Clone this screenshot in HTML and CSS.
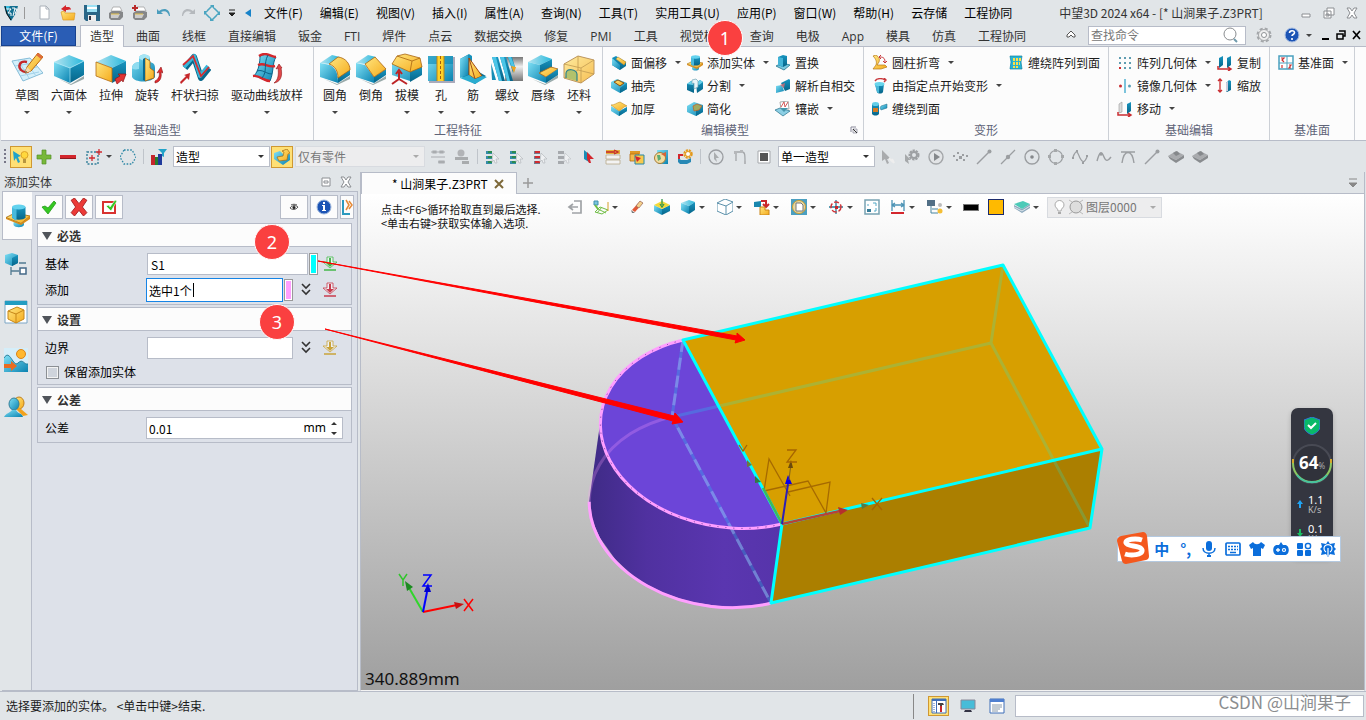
FILE: index.html
```html
<!DOCTYPE html>
<html lang="zh-CN">
<head>
<meta charset="utf-8">
<title>中望3D 2024 x64</title>
<link rel="stylesheet" href="styles.css">
</head>
<body>
<svg class="sprite" aria-hidden="true">
<defs>
<linearGradient id="gb" x1="0" y1="0" x2="1" y2="1"><stop offset="0" stop-color="#7fe0f5"/><stop offset="1" stop-color="#0a82b0"/></linearGradient>
<linearGradient id="gt" x1="0" y1="0" x2="1" y2="0"><stop offset="0" stop-color="#b5e4f0"/><stop offset="1" stop-color="#28b8dc"/></linearGradient>
<linearGradient id="gd" x1="0" y1="0" x2="0" y2="1"><stop offset="0" stop-color="#1895c0"/><stop offset="1" stop-color="#066488"/></linearGradient>
<linearGradient id="gy" x1="0" y1="0" x2="1" y2="1"><stop offset="0" stop-color="#ffe680"/><stop offset="1" stop-color="#f5ab1c"/></linearGradient>
<linearGradient id="gm" x1="0" y1="0" x2="0" y2="1"><stop offset="0" stop-color="#777"/><stop offset=".4" stop-color="#eee"/><stop offset="1" stop-color="#777"/></linearGradient>
</defs>
<!-- large ribbon icons -->
<symbol id="sketch" viewBox="0 0 32 32"><path d="M1 8L19 5 32 20 12 28z" fill="#d4effa" stroke="#86bdd8"/><path d="M4 13l19-3M7 18l19-4M9 23l19-4M7 7l11 18M13 6l12 17" stroke="#a3d3ea" fill="none"/><path d="M16 9c-8-2-9 5-6 8s8 3 8-1" fill="none" stroke="#c4272a" stroke-width="2.4"/><path d="M27 0l5 4-12 14-6 2 2-6z" fill="url(#gy)" stroke="#b96a10"/><path d="M16 14l4 4-6 2z" fill="#f4d9b0"/><path d="M15 18l1 1-2 1z" fill="#222"/><path d="M27 0l5 4-2 2-5-4z" fill="#e06a3a"/></symbol>
<symbol id="box" viewBox="0 0 32 32"><path d="M6 26l12 5 13-8v3l-13 6z" fill="#9aa"/><path d="M1 9L16 2l15 6-14 7z" fill="url(#gt)"/><path d="M1 9l16 6v15L1 23z" fill="url(#gb)"/><path d="M17 15l14-7v14l-14 8z" fill="url(#gd)"/><path d="M1 9l16 6 14-7M17 15v15" fill="none" stroke="#aeeaf8" stroke-width=".7"/></symbol>
<symbol id="extrude" viewBox="0 0 32 32"><path d="M1 9L16 2l15 6-14 7z" fill="url(#gt)"/><path d="M17 15l14-7v14l-14 8z" fill="url(#gd)"/><path d="M1 9l16 6v14L1 23z" fill="url(#gy)" stroke="#b26a10" stroke-width=".8"/><path d="M20 26l5-3-2-2 8 0-3 8-1-2-5 4z" fill="#e03434" stroke="#8f1517" stroke-width=".7"/></symbol>
<symbol id="revolve" viewBox="0 0 32 32"><path d="M1 15c0-4 4-6 7-6V5c0-4 9-5 11 0v4c4 1 5 3 5 6v9c-4 6-20 6-23 0z" fill="url(#gb)"/><ellipse cx="13.500" cy="4.500" rx="5.500" ry="3" fill="#a6e6f5"/><path d="M1 15c0-3 3-6 7-6v7c-4 1-7 0-7-1" fill="#8fdcf0"/><path d="M14 5l5 3v7l4 3v7l-9 3z" fill="url(#gy)" stroke="#a96412" stroke-width=".8"/><path d="M14 5l-2 1v21l2 1z" fill="#0a6a90"/><path d="M24 28c4-2 5-6 4-9l-2 1 4-6 2 6-2-1c1 6-1 10-6 11z" fill="#df2c30" stroke="#8f1517" stroke-width=".6"/></symbol>
<symbol id="rod" viewBox="0 0 32 32"><path d="M6 15L15 4l7 21 8-10" fill="none" stroke="#08688c" stroke-width="6" stroke-linejoin="round"/><path d="M5 14L15 3l6 20 8-10" fill="none" stroke="#39b6d8" stroke-width="4" stroke-linejoin="round"/><path d="M4 12L14 3l8 20 8-9" fill="none" stroke="#d32c30" stroke-width="1.800"/><path d="M1 29l6-6-2-1 6-2-1 7-2-2-6 6z" fill="#c6272a"/></symbol>
<symbol id="drive" viewBox="0 0 32 32"><path d="M9 3c7-4 11 1 16 1-4 6-2 15-6 24-6 0-9-4-16-5C8 17 9 9 9 3z" fill="url(#gb)" stroke="#0a658c"/><path d="M8 3c7-5 12 1 17 1M7 12c7-3 10 3 17 1M2 23c7-1 10 5 17 5" fill="none" stroke="#d3272c" stroke-width="2.400"/><path d="M17 2c-5 9 0 16-6 23M6 18c6-2 9 3 15 3" fill="none" stroke="#0b6288"/><path d="M23 30c4-3 5-8 4-15l-2 1 3-5 3 4-1 0c2 9-1 14-7 15z" fill="#e0474a" stroke="#8f1517" stroke-width=".6"/></symbol>
<symbol id="fillet" viewBox="0 0 32 32"><path d="M5 26l13 5 13-8v3l-13 6z" fill="#9aa"/><path d="M1 10L13 2l8 2-10 7z" fill="url(#gt)"/><path d="M1 10l10 2c6 3 8 8 8 18L1 24z" fill="url(#gb)"/><path d="M19 24l12-8v6l-12 8z" fill="url(#gd)"/><path d="M10 11l9-7c8 1 12 7 12 13l-12 8c0-7-3-12-9-14z" fill="url(#gy)" stroke="#a96412" stroke-width=".8"/></symbol>
<symbol id="chamfer" viewBox="0 0 32 32"><path d="M5 26l13 5 13-8v3l-13 6z" fill="#9aa"/><path d="M1 10L13 2l8 2-10 7z" fill="url(#gt)"/><path d="M1 10l9 2 9 12v6L1 24z" fill="url(#gb)"/><path d="M19 24l12-8v6l-12 8z" fill="url(#gd)"/><path d="M10 11l10-7 11 12-12 8z" fill="url(#gy)" stroke="#a96412" stroke-width=".8"/></symbol>
<symbol id="draft" viewBox="0 0 32 32"><path d="M1 11l10-4 20 6v8l-12 7L1 22z" fill="url(#gb)"/><path d="M19 19l12-6v9l-12 7z" fill="url(#gd)"/><path d="M1 11l5-8 8-2 15 4 2 9-12 5z" fill="url(#gy)" stroke="#a96412" stroke-width=".8"/><path d="M6 3l15 5 8-3M21 8l-2 11" fill="none" stroke="#a96412" stroke-width=".8"/><path d="M8 19v7l-7 5M8 26l8 5M5 21l3-4 3 4" fill="none" stroke="#bd2326" stroke-width="2"/></symbol>
<symbol id="hole" viewBox="0 0 32 32"><path d="M4 4h26v26H4z" fill="#aab"/><path d="M3 3h25v25H3z" fill="url(#gb)"/><path d="M3 3h25v8H3z" fill="#0b86b1" opacity=".6"/><path d="M12 3h7v25h-7z" fill="#ffd028"/><path d="M12 3v25M19 3v25" stroke="#b98316"/><path d="M15.500 3v25" stroke="#a25d10" stroke-dasharray="3 2"/></symbol>
<symbol id="rib" viewBox="0 0 32 32"><path d="M3 6l9-5 3 2v12l14 8-11 8-15-8z" fill="url(#gd)"/><path d="M3 6l8-4v20l-8 3z" fill="url(#gb)"/><path d="M12 5l13 18-7 3-6-4z" fill="url(#gy)" stroke="#a34a12"/><path d="M12 5l6 21" stroke="#a34a12"/><path d="M3 25l9-3 6 4 7-3 5 1-12 7z" fill="#2badd0"/></symbol>
<symbol id="thread" viewBox="0 0 32 32"><path d="M14 4h18v24H14z" fill="url(#gm)"/><path d="M1 4l7 24h6L7 4zM9 4l7 24h6L15 4zM17 4l5 16 2-6-3-10z" fill="url(#gd)"/><path d="M1 4h4l6 24H8zM9 4h4l6 24h-3zM17 4h3l4 10-1 6z" fill="#4cc5e7"/><path d="M20 13l5 1-2 6z" fill="#f2a21c"/><path d="M0 10l5 17H1z" fill="#158db5"/></symbol>
<symbol id="lip" viewBox="0 0 32 32"><path d="M5 26l13 5 13-9v3l-13 7z" fill="#9aa"/><path d="M1 9L14 2l11 4-12 6z" fill="url(#gt)"/><path d="M1 9l12 3v8l6 4v6L1 23z" fill="url(#gb)"/><path d="M13 12l12-6v9l-12 6z" fill="url(#gd)"/><path d="M12 20l12-6 7 2-12 8z" fill="url(#gy)" stroke="#a96412" stroke-width=".8"/><path d="M19 24l12-8v6l-12 8z" fill="url(#gd)"/></symbol>
<symbol id="stock" viewBox="0 0 32 32"><path d="M1 11L15 3l16 4v14L18 30 1 25z" fill="url(#gy)" opacity=".75" stroke="#a8742a"/><path d="M1 11l17 4 13-8M18 15v15M1 25l14-8 16 4M15 3v14" fill="none" stroke="#c19a50" stroke-width=".8"/><path d="M3 25v-5c1-5 10-4 11 1v7" fill="#b3c26c" stroke="#31848c" stroke-width="1.200"/></symbol>
<!-- compact icons -->
<symbol id="cube" viewBox="0 0 16 16"><path d="M1 4l8-3 6 2-6 4z" fill="url(#gt)"/><path d="M1 4l8 3v8l-8-4z" fill="url(#gb)"/><path d="M9 7l6-4v8l-6 4z" fill="url(#gd)"/></symbol>
<symbol id="offset" viewBox="0 0 16 16"><path d="M1 3l4-2 10 6v4l-6 4-8-5z" fill="url(#gd)"/><path d="M1 3l8 7v5l-8-5z" fill="url(#gb)"/><path d="M5 4l8 6 2-3-8-5z" fill="url(#gy)" stroke="#b98a30" stroke-width=".5"/></symbol>
<symbol id="shell" viewBox="0 0 16 16"><path d="M0 4l6-3 10 4v6l-7 4-9-5z" fill="url(#gb)"/><path d="M9 10l7-5v6l-7 4z" fill="url(#gd)"/><path d="M3 4l4-2 6 3-4 3z" fill="url(#gy)" stroke="#875112"/></symbol>
<symbol id="thick" viewBox="0 0 16 16"><path d="M0 5l8 5 8-4v4l-8 5-8-5z" fill="url(#gb)"/><path d="M0 4c4 0 5-2 9-3l7 4c-5 1-5 4-8 5z" fill="url(#gy)" stroke="#c18c22" stroke-width=".6"/><path d="M8 11l8-5v4l-8 5z" fill="url(#gd)"/></symbol>
<symbol id="addsolid" viewBox="0 0 16 16"><path d="M5 12h7v2c-1 2-6 2-7 0z" fill="url(#gb)"/><path d="M0 9l6-3 10 2-6 5z" fill="url(#gy)" stroke="#a8701a" stroke-width=".6"/><path d="M0 9l10 4 6-5v2l-6 4-10-4z" fill="#d98c18"/><path d="M4 2v7c1 2 8 2 9 0V2z" fill="url(#gd)"/><path d="M4 2v7c1 1 2 2 3 2V2z" fill="#48b9db"/><ellipse cx="8.500" cy="2" rx="4.500" ry="1.700" fill="#63d2ee"/></symbol>
<symbol id="divide" viewBox="0 0 16 16"><path d="M0 6l4-3 3 1v11l-7-3zM9 5l4-3 3 2v7l-6 4z" fill="url(#gd)"/><path d="M0 6l4-3 3 1-1 3zM9 5l4-3 3 2-4 3z" fill="#69d2ec"/><path d="M5 2l4-1 2 2v6l-4 2V5L5 6z" fill="#e8f4f8" stroke="#6ea4b5" stroke-width=".7"/></symbol>
<symbol id="simplify" viewBox="0 0 16 16"><path d="M0 5l7-4 9 3v7l-7 4-9-4z" fill="url(#gb)"/><path d="M9 9l7-5v7l-7 4z" fill="url(#gd)"/><path d="M6 5l4-2 5 2-3 4-5 1z" fill="#a0aa60" stroke="#c65b20" stroke-width=".7"/></symbol>
<symbol id="replace" viewBox="0 0 16 16"><path d="M1 11l6-3 8 2-6 5z" fill="#79c8df" stroke="#3c8aa1"/><path d="M3 2l5-2 4 1v9l-4 2-5-2z" fill="url(#gd)"/><path d="M3 2l5 1v9l-5-2z" fill="#44b5d8"/></symbol>
<symbol id="selfx" viewBox="0 0 16 16"><path d="M1 8l6-1 2 6-8 2z" fill="url(#gb)"/><path d="M6 5l8-4 1 1v9l-5 2z" fill="url(#gd)"/><path d="M5 7l5-2-1 5z" fill="#d66b74" opacity=".8"/></symbol>
<symbol id="inlay" viewBox="0 0 16 16"><path d="M0 9l5-2 10 3-7 5z" fill="#8ccfe4" stroke="#25708b" stroke-width=".7"/><path d="M6 8L5 1l8-1 1 8z" fill="#fff" stroke="#aaa"/><path d="M6 6l3-5 1 5 3-5" stroke="#c33" fill="none" stroke-width=".8"/><path d="M5 7l4 4 4-4z" fill="#4595ac"/></symbol>
<symbol id="cylbend" viewBox="0 0 16 16"><path d="M1 1l3-1c3 2 4 4 3 7l-2 3 8 0 2 2-6 2H1l3-4C5 7 4 4 1 1z" fill="url(#gy)" stroke="#b5791b" stroke-width=".7"/><path d="M8 2c4 0 5 2 5 5M9 0L7 2l2 2M11 6l2 2 2-2" fill="none" stroke="#c9363a"/></symbol>
<symbol id="deform" viewBox="0 0 16 16"><path d="M3 6h9l-1 8c-1 2-5 2-6 0z" fill="url(#gd)"/><path d="M3 6h4v9c-2 0-2-1-2-1z" fill="#48b8d8"/><ellipse cx="7.500" cy="6" rx="5" ry="2" fill="#68d5ec"/><path d="M3 3c2-3 7-3 10-1M12 0l2 2-2 2" fill="none" stroke="#c8363a" stroke-width="1.400"/></symbol>
<symbol id="wrap" viewBox="0 0 16 16"><path d="M0 3h7v10c-2 2-5 2-7 0z" fill="url(#gd)"/><ellipse cx="3.500" cy="3" rx="3.500" ry="2" fill="#63cde7"/><path d="M1 7h5v4H1z" fill="#d57b23"/><path d="M9 5l6-2v4l-6 2-1-2z" fill="url(#gb)" stroke="#25708b" stroke-width=".5"/></symbol>
<symbol id="wraparr" viewBox="0 0 16 16"><path d="M2 1h12l-1 6 1 7H2l1-7z" fill="#27b4d4" stroke="#14819f" stroke-width=".7"/><path d="M5 3h2v3H5zM8 3h2v3H8zM11 3h2v3h-2zM5 7h2v3H5zM8 7h2v3H8zM11 7h1v3h-1zM5 11h2v2H5zM8 11h2v2H8z" fill="#ffe04a"/></symbol>
<symbol id="pattern" viewBox="0 0 16 16"><path d="M2 2h2v2H2zM7 2h2v2H7zM12 2h2v2h-2zM2 7h2v2H2zM7 7h2v2H7zM12 7h2v2h-2zM7 12h2v2H7zM12 12h2v2h-2z" fill="#5f9db1"/><path d="M2 12h2v2H2z" fill="#d02b2e"/></symbol>
<symbol id="mirror" viewBox="0 0 16 16"><path d="M7 1h2v14H7z" fill="#7cc4dc"/><circle cx="3.500" cy="8" r="1.500" fill="#c92c30"/><circle cx="12.500" cy="8" r="1.500" fill="#5aa0b8"/></symbol>
<symbol id="move" viewBox="0 0 16 16"><path d="M2 3l3-2v10l-3 1z" fill="#ddd" stroke="#999" stroke-width=".6"/><path d="M10 3l4-2v9l-4 3z" fill="url(#gd)"/><path d="M1 11v3h12M11 12l3 2-3 2" fill="none" stroke="#c92c30" stroke-width="1.500"/></symbol>
<symbol id="copy" viewBox="0 0 16 16"><path d="M2 3l4-2v9l-4 3zM10 3l4-2v9l-4 3z" fill="url(#gd)"/><path d="M1 11v3h12M11 12l3 2-3 2" fill="none" stroke="#c92c30" stroke-width="1.500"/></symbol>
<symbol id="scale" viewBox="0 0 16 16"><path d="M3 1v13M1 3l2-2 2 2M1 12l2 2 2-2" fill="none" stroke="#c92c30" stroke-width="1.300"/><path d="M9 5l3-3 2 1v9l-4 2-1-1z" fill="url(#gd)"/><path d="M9 5l2-2v10H9z" fill="#ccd"/></symbol>
<symbol id="datum" viewBox="0 0 16 16"><path d="M1 1h14v13H1z" fill="#fff" stroke="#4aa0be" stroke-width="1.500"/><path d="M9 1v7h6M1 8h8v6" fill="none" stroke="#4aa0be"/><path d="M3 3h3l-2 2 2 2M4 10v3M11 10h2l-2 3h2" stroke="#c33" stroke-width="1.200" fill="none"/></symbol>
<symbol id="logo" viewBox="0 0 16 16"><path d="M1 1h14l-2 7-5 8-5-8z" fill="#136f91"/><path d="M1 1h6l-3 6z" fill="#35bbdf"/><path d="M3 4h5L5 8h3v3M9 3h3l-2 8M12 4h2l-2 5" fill="none" stroke="#fff"/><path d="M2 1l2 8 4 6" fill="none" stroke="#111"/></symbol>
<symbol id="new" viewBox="0 0 16 16"><path d="M4 1h6l3 3v10H4z" fill="#fff" stroke="#aab1b9"/><path d="M10 1v3h3" fill="none" stroke="#aab1b9"/></symbol>
<symbol id="open" viewBox="0 0 16 16"><path d="M1 7l3-1 1 2h10l-1 7H3z" fill="url(#gy)" stroke="#dc9a22" stroke-width=".7"/><path d="M11 5C11 1 7 2 6 2V0L1 4l5 3V5c3 0 4-1 5 0z" fill="#d5262b"/></symbol>
<symbol id="save" viewBox="0 0 16 16"><path d="M0 0h16v16H2l-2-2z" fill="#2a6687"/><path d="M3 0h10v7H3z" fill="#9be1f4"/><path d="M3 2h10v2H3z" fill="#fff"/><path d="M4 10h8v6H4z" fill="#eee"/><path d="M5 11h2v4H5z" fill="#334"/></symbol>
<symbol id="print" viewBox="0 0 16 16"><path d="M5 2h7l2 4H3z" fill="#fff" stroke="#999" stroke-width=".7"/><path d="M1 8l3-2h8l3 1v5l-3 3H3l-2-2z" fill="#858789"/><path d="M3 9h9l-2 4H3z" fill="#ccc"/><path d="M3 9h8" stroke="#e3c04a"/></symbol>
<symbol id="undo" viewBox="0 0 16 16"><path d="M1 4v5h6L5 7c4-2 7 0 8 4h1C14 4 8 2 3 6z" fill="#4b9dbd"/></symbol>
<symbol id="redo" viewBox="0 0 16 16"><path d="M15 4v5H9l2-2C7 5 4 7 3 11H2C2 4 8 2 13 6z" fill="#b5b9bd"/></symbol>
<symbol id="cycle" viewBox="0 0 16 16"><path d="M3 6l5-5M10 3l5 5M13 10l-5 5M6 13L1 8" fill="none" stroke="#4ba5c1" stroke-width="1.600"/><path d="M6 0h4v4zM16 6v4h-4zM10 16H6v-4zM0 10V6h4z" fill="#4ba5c1"/></symbol>
<symbol id="bulbpick" viewBox="0 0 16 16"><path d="M0 2l8 5-3 1 2 5-2 1-2-5-2 3z" fill="#22a3c9"/><circle cx="11.500" cy="6" r="3.500" fill="#ffd83c" stroke="#dda428"/><path d="M10 10h3v4h-3z" fill="#b7963f"/></symbol>
<symbol id="plus" viewBox="0 0 16 16"><path d="M6 1h4v5h5v4h-5v5H6v-5H1V6h5z" fill="#78b83a" stroke="#55902a" stroke-width=".7"/></symbol>
<symbol id="minus" viewBox="0 0 16 16"><path d="M0 6h16v4H0z" fill="#d3262d"/><path d="M0 9h16v1H0z" fill="#8c1a1f"/></symbol>
<symbol id="boxpick" viewBox="0 0 16 16"><path d="M1 3h11v12H1z" fill="none" stroke="#35809a" stroke-width="1.400" stroke-dasharray="2 1.500"/><path d="M6 6v6M3 9h6M13 0v6M10 3h6" stroke="#d02b30" stroke-width="1.300"/></symbol>
<symbol id="hex" viewBox="0 0 16 16"><path d="M4 1h8l4 7-4 7H4L0 8z" fill="none" stroke="#2d87a5" stroke-width="1.300" stroke-dasharray="1.600 1.500"/></symbol>
<symbol id="filter" viewBox="0 0 16 16"><path d="M0 6h4v10H0z" fill="#c5262b"/><path d="M4 8h3v8H4z" fill="#287d2e"/><path d="M7 5h4v11H7z" fill="#203b9c"/><path d="M7 0h9l-3 4v4l-2-1V4z" fill="#22a3c9"/></symbol>
<symbol id="partpick" viewBox="0 0 16 16"><path d="M0 4l6-2 4 4 6-1v6l-7 5-9-6z" fill="url(#gb)"/><path d="M3 8l6-1 1-4-2-1 5-2 3 4-2 1-1 6-8 1z" fill="url(#gy)" stroke="#a06912" stroke-width=".7"/></symbol>
<symbol id="chain" viewBox="0 0 16 16"><path d="M1 3h14M1 8h14M8 13h7M3 2h3v2H3zM10 2h3v2h-3zM9 12h5v2H9z" fill="none" stroke="#a9acaf" stroke-width="1.200"/></symbol>
<symbol id="stamp" viewBox="0 0 16 16"><circle cx="7" cy="4" r="3.500" fill="#b1b3b6"/><path d="M1 8h13v3H1zM8 12h7v3H8z" fill="#a8abad"/></symbol>
<symbol id="list" viewBox="0 0 16 16"><path d="M1 2h6v3H1zM1 7h6v3H1zM1 12h6v3H1z" fill="#358ca8"/><path d="M3 3h4M3 8h4M3 13h4" stroke="#2a8b34" stroke-width="1.400"/><path d="M8 4l6 6-3 0 1 4-2 0-1-3-2 2z" fill="#eef0f2" stroke="#b5b9bd" stroke-width=".7"/></symbol>
<symbol id="listr" viewBox="0 0 16 16"><path d="M1 2h6v3H1zM1 7h6v3H1zM1 12h6v3H1z" fill="#74788c"/><path d="M2 3h5M2 8h5M2 13h5" stroke="#d02b30" stroke-width="1.800"/><path d="M8 4l6 6-3 0 1 4-2 0-1-3-2 2z" fill="#eef0f2" stroke="#b5b9bd" stroke-width=".7"/></symbol>
<symbol id="listg" viewBox="0 0 16 16"><path d="M1 2h6v3H1zM1 7h6v3H1zM1 12h6v3H1z" fill="#a6a9ad"/><path d="M8 4l6 6-3 0 1 4-2 0-1-3-2 2z" fill="#eef0f2" stroke="#c3c6ca" stroke-width=".7"/></symbol>
<symbol id="arrow2" viewBox="0 0 16 16"><path d="M3 1l6 5-2 1 1 6-5-3z" fill="#1b8db5"/><path d="M6 3l7 7H9l1 4-2 0-2-4z" fill="#d3262d"/></symbol>
<symbol id="rows" viewBox="0 0 16 16"><path d="M1 1h14v4H1z" fill="#e5b23c"/><path d="M1 6h14v4H1zM1 11h14v4H1z" fill="#f3f3f3" stroke="#b8a98a" stroke-width=".8"/><path d="M1 3h9M9 1l4 2-4 2" stroke="#c5262b" stroke-width="1.300" fill="none"/></symbol>
<symbol id="boxes" viewBox="0 0 16 16"><path d="M1 2h10v3H1z" fill="#e09a24"/><path d="M1 5h9v7H1z" fill="#f4bb4a" stroke="#b36b12" stroke-width=".8"/><path d="M6 6h9v9H6z" fill="#f8c94c" stroke="#2788a8"/><path d="M6 7l6 2-4 4z" fill="#d3262d"/></symbol>
<symbol id="earth" viewBox="0 0 16 16"><path d="M4 1h11v14H5z" fill="url(#gb)"/><circle cx="7" cy="9" r="5.500" fill="#f2dca0" stroke="#a97d36"/><path d="M4 6l3 0 1 4-3 2z" fill="#5bab74"/><path d="M8 5l5-2v5z" fill="#d3663a"/></symbol>
<symbol id="geary" viewBox="0 0 16 16"><path d="M1 9l3 2h6l4-2v4l-4 2H3l-2-2z" fill="#2788b5"/><path d="M2 10V6h4" fill="none" stroke="#d3262d" stroke-width="2"/><circle cx="11" cy="5" r="3.500" fill="none" stroke="#e49a1c" stroke-width="2.500" stroke-dasharray="2 .8"/><circle cx="11" cy="5" r="2.500" fill="#fff" stroke="#e49a1c"/></symbol>
<symbol id="compass" viewBox="0 0 16 16"><circle cx="8" cy="8" r="7" fill="none" stroke="#9b9ea2" stroke-width="1.300"/><path d="M6 3l5 6-3 0 1 4-3-3z" fill="#aaadaf"/></symbol>
<symbol id="poly" viewBox="0 0 16 16"><path d="M4 12V3h4M10 3c3 0 3 3 3 10" fill="none" stroke="#a3a6a9" stroke-width="1.300"/><path d="M2 2h3v3H2zM8 1h3v3H8zM12 12h2v3h-2z" fill="#b5b7ba"/></symbol>
<symbol id="square" viewBox="0 0 16 16"><path d="M2 2h12v12H2z" fill="#fff" stroke="#a5a8ac"/><path d="M4 4h8v8H4z" fill="#555"/></symbol>
<symbol id="cursorg" viewBox="0 0 16 16"><path d="M2 1l9 9H7l2 4-2 1-2-5-3 2z" fill="#a9abad"/><path d="M9 9l4 4M12 10l2 4" stroke="#eee" stroke-width="2"/></symbol>
<symbol id="gearg" viewBox="0 0 16 16"><circle cx="10" cy="6" r="4.500" fill="none" stroke="#9da0a3" stroke-width="2" stroke-dasharray="2.300 .9"/><circle cx="10" cy="6" r="3" fill="#e1e5e8" stroke="#9da0a3" stroke-width="2"/><path d="M1 5l6 6-3 0 1 4-4-3z" fill="#a5a8aa"/></symbol>
<symbol id="playg" viewBox="0 0 16 16"><circle cx="8" cy="8" r="7" fill="#e2e4e6" stroke="#a3a6a9" stroke-width="1.400"/><path d="M6 4l6 4-6 4z" fill="#85888b"/></symbol>
<symbol id="dotsg" viewBox="0 0 16 16"><path d="M1 6h2v2H1zM4 10h2v2H4zM5 3h2v2H5zM7 7h3v3H7zM10 5h2v2h-2zM14 6h2v2h-2zM11 10h2v2h-2z" fill="#9b9ea1"/></symbol>
<symbol id="lineg" viewBox="0 0 16 16"><path d="M1 15L14 2" stroke="#9b9ea1" stroke-width="1.400"/><circle cx="13.500" cy="2.500" r="2" fill="#9b9ea1"/></symbol>
<symbol id="midg" viewBox="0 0 16 16"><path d="M1 15L15 1" stroke="#9b9ea1" stroke-width="1.300"/><circle cx="8" cy="8" r="2.200" fill="#9b9ea1"/></symbol>
<symbol id="cdotg" viewBox="0 0 16 16"><circle cx="8" cy="8" r="7" fill="none" stroke="#9b9ea1" stroke-width="1.400"/><circle cx="8" cy="8" r="1.800" fill="#85888b"/></symbol>
<symbol id="quadg" viewBox="0 0 16 16"><circle cx="8" cy="8" r="6.500" fill="none" stroke="#9b9ea1" stroke-width="1.200"/><path d="M6 0h3v3H6zM6 13h3v3H6zM0 6h3v3H0zM13 6h3v3h-3z" fill="#a5a8aa"/></symbol>
<symbol id="waveg" viewBox="0 0 16 16"><path d="M1 8C5-2 6 5 8 9s4 6 7-1" fill="none" stroke="#9b9ea1" stroke-width="1.300"/><path d="M4 1h2v2H4zM10 13h2v2h-2zM0 8h2v2H0zM14 6h2v2h-2z" fill="#9b9ea1"/></symbol>
<symbol id="wave2g" viewBox="0 0 16 16"><path d="M1 12C4 1 6 3 8 8s4 4 7 0" fill="none" stroke="#9b9ea1" stroke-width="1.400"/><circle cx="5" cy="5" r="1.800" fill="#9b9ea1"/></symbol>
<symbol id="tang" viewBox="0 0 16 16"><path d="M1 3h14M2 14C4 0 12 0 14 14" fill="none" stroke="#9b9ea1" stroke-width="1.400"/></symbol>
<symbol id="blockg" viewBox="0 0 16 16"><path d="M0 7l8-5 8 4-8 5z" fill="#a9abae"/><path d="M0 7l8 4 8-5v3l-8 5-6-4z" fill="#898c8f"/><path d="M5 4l4-2 3 3-4 2z" fill="#85888b"/></symbol>
<!-- panel and view icons -->
<symbol id="check" viewBox="0 0 16 16"><path d="M1 8l3-1 3 2 6-7 2 2-8 11z" fill="#35c822" stroke="#259b19" stroke-width=".8"/></symbol>
<symbol id="cross" viewBox="0 0 16 16"><path d="M1 2l3-2 4 5 4-5 3 2-4 6 4 5-3 3-4-5-4 5-3-3 4-5z" fill="#ec3a37" stroke="#a51e20" stroke-width=".8"/></symbol>
<symbol id="apply" viewBox="0 0 16 16"><path d="M2 3h12v11H2z" fill="#fff" stroke="#d8322f" stroke-width="2"/><path d="M5 7l3-1 1 2 5-7 2 1-6 10z" fill="#35c822" stroke="#fff" stroke-width=".6"/></symbol>
<symbol id="eye" viewBox="0 0 16 16"><path d="M4 9c2-3 6-3 8-1-2 3-6 3-8 1M5 6c2-1 4-1 6 0" fill="none" stroke="#555"/><circle cx="8" cy="8.500" r="1.500" fill="#222"/></symbol>
<symbol id="info" viewBox="0 0 16 16"><circle cx="8" cy="8" r="7" fill="#1c54b5" stroke="#9fb8dd"/><path d="M7 3h2v2H7zM6 6h3v5h1v1H6v-1h1V7H6z" fill="#fff"/></symbol>
<symbol id="expand" viewBox="0 0 12 16"><path d="M2 1v14h7" fill="none" stroke="#2c9abf" stroke-width="2"/><path d="M5 1l3 5-3 5M8 2l3 4-3 4" fill="none" stroke="#e58a37" stroke-width="1.500"/></symbol>
<symbol id="tree" viewBox="0 0 24 24"><path d="M1 3l7-2 6 2v8l-6 3-7-3z" fill="url(#gb)"/><path d="M8 6l6-3v8l-6 3z" fill="url(#gd)"/><path d="M7 15v8M7 19h8M15 11h7" stroke="#527b91" fill="none" stroke-width="1.300"/><path d="M16 16h6v6h-6z" fill="#fff" stroke="#446a88" stroke-width="1.500"/></symbol>
<symbol id="visual" viewBox="0 0 24 24"><path d="M1 1h22v22H1z" fill="#fff" stroke="#7da6c5"/><path d="M1 1h22v4H1z" fill="#239dc2"/><path d="M4 11l9-4 7 3v9l-8 4-8-4z" fill="url(#gy)" stroke="#c78718"/><path d="M4 11l8 3 8-4M12 14v9" fill="none" stroke="#c78718"/></symbol>
<symbol id="scene" viewBox="0 0 24 24"><path d="M0 0h24v24H0z" fill="#d5eef9"/><path d="M0 10c6-10 9 10 14 5s6 2 10 1v8H0z" fill="url(#gb)"/><path d="M0 10c6-10 9 10 14 5s6 2 10 1" fill="none" stroke="#267f9d"/><circle cx="17" cy="6" r="4.500" fill="#ffb82f" stroke="#dc841a"/><path d="M0 16h7v-3l6 5-6 5v-3H0z" fill="#e96c20"/></symbol>
<symbol id="users" viewBox="0 0 24 24"><ellipse cx="15" cy="7" rx="5" ry="6" fill="url(#gy)" stroke="#c0801c"/><path d="M14 11l3 2 7 6-5 1-7-7z" fill="#f2a21c"/><ellipse cx="10" cy="8" rx="5" ry="6" fill="url(#gb)" stroke="#337f99"/><path d="M0 21c2-4 6-4 8-7h4c2 4 6 3 7 7z" fill="url(#gb)"/></symbol>
<symbol id="pickdown" viewBox="0 0 16 16"><path d="M5 1h6v5h4l-7 6-7-6h4z" fill="#fff" fill-opacity=".5" stroke="currentColor" stroke-width=".8"/><path d="M7 2h2v5h3l-4 4-4-4h3z" fill="currentColor"/><path d="M2 14h12" stroke="currentColor" stroke-width="1.500"/></symbol>
<symbol id="chevrons" viewBox="0 0 12 16"><path d="M2 2l4 4 4-4M2 8l4 4 4-4" fill="none" stroke="#333" stroke-width="1.600"/></symbol>
<symbol id="exit" viewBox="0 0 16 16"><path d="M7 2h7v12H5M11 8H2M6 5L2 8l4 3" fill="none" stroke="#a0a3a6" stroke-width="1.700"/></symbol>
<symbol id="gridview" viewBox="0 0 16 16"><path d="M2 13l5-5 8 3-6 4zM5 10l8 4M9 8l-5 6" fill="none" stroke="#71be46"/><path d="M1 2h4v4H1z" fill="#7ac5df" stroke="#3e91ac"/><path d="M2 6l3 4" stroke="#71be46" stroke-width="2"/><path d="M15 3v9" stroke="#d4a12d"/></symbol>
<symbol id="eraser" viewBox="0 0 16 16"><path d="M3 11l8-9 3 2-8 9z" fill="#e05a38"/><path d="M7 7l4-5 3 2-4 5z" fill="#f4d18d" stroke="#755" stroke-width=".5"/><path d="M2 11l4 3-3 0z" fill="#777"/></symbol>
<symbol id="topface" viewBox="0 0 16 16"><path d="M0 6l8 4v6l-8-4z" fill="url(#gb)"/><path d="M8 10l8-4v6l-8 4z" fill="url(#gd)"/><path d="M0 6l8-4 8 4-8 4z" fill="#f3d93a"/><path d="M8 0v6M6 5l2 3 2-3" stroke="#34964b" fill="none" stroke-width="1.300"/></symbol>
<symbol id="wire" viewBox="0 0 16 16"><path d="M0 4l8-4 8 3v9l-7 4-9-4zM0 4l9 3 7-4M9 7v9" fill="#fff" stroke="#5c91ab"/></symbol>
<symbol id="swap" viewBox="0 0 16 16"><path d="M0 3l7-1v6H0z" fill="#1a87ae"/><path d="M7 2h5v5M9 5l3 3 3-3" stroke="#c9272b" fill="none" stroke-width="2"/><path d="M6 8h5v3h4v5H6z" fill="url(#gy)" stroke="#cb861b"/></symbol>
<symbol id="zoomdoc" viewBox="0 0 16 16"><path d="M0 0h16v16H0z" fill="#4b9fc0"/><circle cx="8" cy="8" r="6.500" fill="#e5d9a4" stroke="#ce9c2f"/><path d="M5 4h5l2 2v6H5z" fill="#fff" stroke="#777"/></symbol>
<symbol id="target" viewBox="0 0 16 16"><path d="M8 1v14M1 8h14" stroke="#267d9a" stroke-width="1.300"/><circle cx="8" cy="8" r="5" fill="none" stroke="#d0363a" stroke-width="1.500" stroke-dasharray="5 2"/><path d="M7 7h3v3H7z" fill="#c9272b"/></symbol>
<symbol id="fullview" viewBox="0 0 16 16"><path d="M1 1h14v14H1z" fill="#fff" stroke="#78a2b2" stroke-width="1.500"/><path d="M3 10h4v3H3z" fill="#367d9a"/><path d="M4 7V5M9 4h3v3M12 9v3h-2" stroke="#55a9c6" fill="none"/></symbol>
<symbol id="dim" viewBox="0 0 16 16"><path d="M2 1v11M14 1v11M2 6h12M5 4L2 6l3 2M11 4l3 2-3 2" fill="none" stroke="#4c93b5" stroke-width="1.300"/><path d="M1 14h13" stroke="#d3262d" stroke-width="2"/></symbol>
<symbol id="showtree" viewBox="0 0 16 16"><path d="M0 1h8v6H0z" fill="#526f86"/><path d="M4 7v7h7M5 10h6" fill="none" stroke="#4785a0"/><circle cx="13" cy="6" r="2" fill="#bbb"/><circle cx="13" cy="12" r="2.500" fill="#f4be35"/></symbol>
<symbol id="layers" viewBox="0 0 16 16"><path d="M0 6l8 4 8-5v4l-8 5-8-5z" fill="#8da9bd"/><path d="M0 5l9-3 7 3-8 5z" fill="#4ccab8"/><path d="M0 8l8 4 8-5" stroke="#fff" fill="none" stroke-width=".7"/></symbol>
<symbol id="bulb" viewBox="0 0 16 16"><path d="M6 12c0-3-3-3-3-6a4 4 0 0 1 9 0c0 3-3 3-3 6z" fill="#fff" stroke="#aaa"/><path d="M6 13h3v2H6z" fill="#aaa"/></symbol>
<symbol id="disc" viewBox="0 0 16 16"><path d="M1 1l3 2M15 1l-3 2M1 15l3-2M15 15l-3-2" stroke="#bbb"/><circle cx="8" cy="8" r="6" fill="#ddd" stroke="#999"/></symbol>
<symbol id="xmark" viewBox="0 0 12 12"><path d="M1 1h3l2 3 2-3h3L8 6l3 5H8L6 8l-2 3H1l3-5z" fill="#fff" stroke="#8b8e92"/></symbol>
<symbol id="gear" viewBox="0 0 16 16"><circle cx="8" cy="8" r="6.500" fill="#eee" stroke="#a3a6a9" stroke-width="2" stroke-dasharray="3 2.100"/><circle cx="8" cy="8" r="5.500" fill="#eee" stroke="#a3a6a9"/><circle cx="8" cy="8" r="2.500" fill="#fff" stroke="#8f9295"/></symbol>
<symbol id="search" viewBox="0 0 16 16"><circle cx="7" cy="7" r="6" fill="none" stroke="#8a8d90"/><path d="M11 12l3 3" stroke="#6f9aac" stroke-width="2"/></symbol>
<symbol id="tools" viewBox="0 0 16 16"><path d="M1 1h14v14H1z" fill="#fff" stroke="#3f6fb8"/><path d="M1 1h14v2H1z" fill="#3f6fb8"/><path d="M3 5v9" stroke="#3f6fb8" stroke-dasharray="1 1"/><path d="M5.500 3v12" stroke="#3f6fb8"/><path d="M7 5h5l1 2H7zM9 6h2v3H9z" fill="#444"/><path d="M9 8h2v6H9z" fill="#c9272b"/></symbol>
<symbol id="monitor" viewBox="0 0 16 16"><path d="M1 2h14v9H1z" fill="#46bcd8" stroke="#889"/><path d="M5 12h6l1 2H4z" fill="#334"/></symbol>
<symbol id="note" viewBox="0 0 16 16"><path d="M1 1h14v14H1z" fill="#fff" stroke="#3f6fb8"/><path d="M1 1h14v3H1z" fill="#4f7fd0"/><path d="M3 7h10M3 9h10M3 11h8M3 13h6" stroke="#89a"/></symbol>
<!-- input method bar -->
<symbol id="mic" viewBox="0 0 16 16"><rect x="5" y="0" width="6" height="10" rx="3" fill="#0b6edb"/><path d="M2 7c0 7 12 7 12 0M8 12v3" fill="none" stroke="#0b6edb" stroke-width="1.500"/><path d="M6 14h4v2H6z" fill="#0b6edb"/></symbol>
<symbol id="keyb" viewBox="0 0 16 16"><rect x="1" y="2" width="14" height="12" rx="1" fill="none" stroke="#0b6edb" stroke-width="1.700"/><path d="M3 5.500h10M3 8.500h10" stroke="#0b6edb" stroke-width="1.700" stroke-dasharray="2 1"/><path d="M5 11.500h6" stroke="#0b6edb" stroke-width="1.500"/></symbol>
<symbol id="shirt" viewBox="0 0 16 16"><path d="M4 1c2 3 6 3 8 0l4 3-2 4-2-1v8H4V7L2 8 0 4z" fill="#0b6edb"/></symbol>
<symbol id="pad" viewBox="0 0 16 16"><path d="M8 1l2 3h2c5 0 5 10 0 10H4C-1 14-1 4 4 4h2z" fill="#0b6edb"/><path d="M3 9h4M5 7v4" stroke="#fff" stroke-width="1.300"/><circle cx="11" cy="9" r="1.500" fill="none" stroke="#fff" stroke-width="1.200"/></symbol>
<symbol id="apps" viewBox="0 0 16 16"><rect x="1" y="2" width="6" height="6" rx="1" fill="#0b6edb"/><rect x="9.500" y="2.500" width="5" height="5" rx="2" fill="none" stroke="#0b6edb" stroke-width="1.500"/><rect x="1" y="9" width="6" height="6" rx="1" fill="#0b6edb"/><rect x="9" y="9" width="6" height="6" rx="1" fill="#0b6edb"/></symbol>
<symbol id="imeset" viewBox="0 0 16 16"><path d="M8 0l2 3 5-1-1 4 2 2-2 2 1 4-5-1-2 3-2-3-5 1 1-4-2-2 2-2-1-4 5 1z" fill="#0b6edb"/><path d="M6 11a4 4 0 1 1 4 0M8 7v8" fill="none" stroke="#fff" stroke-width="1.200"/></symbol>
<symbol id="sogou" viewBox="0 0 32 32"><path d="M4 4l22-4q3 0 4 4l2 20q0 3-3 4L9 32q-3 0-4-3L0 9q0-4 4-5z" fill="#f4581d"/><path d="M25 8c-6-2-17-1-16 3s15 2 16 7-11 6-17 4" fill="none" stroke="#fff" stroke-width="5"/></symbol>
</svg>

<header class="titlebar">
  <div class="quick">
    <svg class="i16"><use href="#logo"/></svg><i class="vline"></i>
    <button aria-label="新建"><svg class="i16"><use href="#new"/></svg></button>
    <button aria-label="打开"><svg class="i16"><use href="#open"/></svg></button>
    <button aria-label="保存"><svg class="i16"><use href="#save"/></svg></button>
    <button aria-label="打印"><svg class="i16"><use href="#print"/></svg></button>
    <button aria-label="批量打印"><svg class="i16"><use href="#print"/><path d="M3 0v6M0 3h6" stroke="#b92b2b" stroke-width="2"/></svg></button>
    <button aria-label="撤销"><svg class="i16"><use href="#undo"/></svg></button>
    <button aria-label="重做"><svg class="i16"><use href="#redo"/></svg></button>
    <button aria-label="刷新"><svg class="i16"><use href="#cycle"/></svg></button>
    <button class="slim" aria-label="自定义"><svg class="i8" viewBox="0 0 8 8"><path d="M1 1h6M1 4h6L4 7z" stroke="#222" fill="#222"/></svg></button>
    <button class="slim" aria-label="向左"><svg class="i8" viewBox="0 0 8 8"><path d="M7 0v8L1 4z" fill="#1883c9"/></svg></button>
  </div>
  <nav class="menu"><button>文件(F)</button><button>编辑(E)</button><button>视图(V)</button><button>插入(I)</button><button>属性(A)</button><button>查询(N)</button><button>工具(T)</button><button>实用工具(U)</button><button>应用(P)</button><button>窗口(W)</button><button>帮助(H)</button><button>云存储</button><button>工程协同</button></nav>
  <div class="title">中望3D 2024 x64 - [* 山涧果子.Z3PRT]</div>
  <div class="winctl">
    <button aria-label="最小化"><svg class="i12" viewBox="0 0 12 12"><path d="M2 7h8v3H2z" fill="#fff" stroke="#8b8e92"/></svg></button>
    <button aria-label="还原"><svg class="i12" viewBox="0 0 12 12"><path d="M4 1h7v7H4zM1 4h7v7H1zM3 7h3v2H3z" fill="#fff" stroke="#8b8e92"/></svg></button>
    <button aria-label="关闭"><svg class="i12"><use href="#xmark"/></svg></button>
  </div>
</header>

<div class="tabs">
  <button class="filebtn">文件(F)</button>
  <nav class="tablist"><button class="active">造型</button><button>曲面</button><button>线框</button><button>直接编辑</button><button>钣金</button><button>FTI</button><button>焊件</button><button>点云</button><button>数据交换</button><button>修复</button><button>PMI</button><button>工具</button><button>视觉样式</button><button>查询</button><button>电极</button><button>App</button><button>模具</button><button>仿真</button><button>工程协同</button></nav>
  <div class="tabtools">
    <button aria-label="折叠"><svg class="i12" viewBox="0 0 12 12"><path d="M2 6l4-4 4 4v2H8L6 6 4 8H2z" fill="#fff" stroke="#555"/></svg></button>
    <label class="find"><input type="text" placeholder="查找命令" aria-label="查找命令"><svg class="i16"><use href="#search"/></svg></label>
    <button aria-label="设置"><svg class="i16"><use href="#gear"/></svg></button>
    <button class="help" aria-label="帮助"><svg class="i16" viewBox="0 0 16 16"><circle cx="8" cy="8" r="7" fill="#1c54b5" stroke="#a9bfe2"/><path d="M5.500 6c0-3 5-3 5-.5 0 2-2.500 2-2.500 3.500M8 11v2" fill="none" stroke="#fff" stroke-width="1.600"/></svg><i class="caret"></i></button>
    <button aria-label="最小化文档"><svg class="i12" viewBox="0 0 12 12"><path d="M3 9h7v2H3z"/></svg></button>
    <button aria-label="还原文档"><svg class="i12" viewBox="0 0 12 12"><path d="M4 2h6v5H8M2 5h6v5H2z" fill="none" stroke="#000" stroke-width="1.500"/></svg></button>
    <button aria-label="关闭文档"><svg class="i12" viewBox="0 0 12 12"><path d="M2 2l7 8M9 2l-7 8" stroke="#000" stroke-width="1.700"/></svg></button>
  </div>
</div>

<section class="ribbon">
  <div class="group g1"><div class="big">
    <button><svg class="i32"><use href="#sketch"/></svg>草图<i class="caret"></i></button>
    <button><svg class="i32"><use href="#box"/></svg>六面体<i class="caret"></i></button>
    <button><svg class="i32"><use href="#extrude"/></svg>拉伸</button>
    <button><svg class="i32"><use href="#revolve"/></svg>旋转</button>
    <button><svg class="i32"><use href="#rod"/></svg>杆状扫掠<i class="caret"></i></button>
    <button><svg class="i32"><use href="#drive"/></svg>驱动曲线放样<i class="caret"></i></button>
  </div><h2>基础造型</h2></div>
  <div class="group g2"><div class="big">
    <button><svg class="i32"><use href="#fillet"/></svg>圆角<i class="caret"></i></button>
    <button><svg class="i32"><use href="#chamfer"/></svg>倒角</button>
    <button><svg class="i32"><use href="#draft"/></svg>拔模<i class="caret"></i></button>
    <button><svg class="i32"><use href="#hole"/></svg>孔<i class="caret"></i></button>
    <button><svg class="i32"><use href="#rib"/></svg>筋<i class="caret"></i></button>
    <button><svg class="i32"><use href="#thread"/></svg>螺纹<i class="caret"></i></button>
    <button><svg class="i32"><use href="#lip"/></svg>唇缘</button>
    <button><svg class="i32"><use href="#stock"/></svg>坯料<i class="caret"></i></button>
  </div><h2>工程特征</h2></div>
  <div class="group g3"><div class="small">
    <button><svg class="i16"><use href="#offset"/></svg>面偏移<i class="caret"></i></button>
    <button><svg class="i16"><use href="#shell"/></svg>抽壳</button>
    <button><svg class="i16"><use href="#thick"/></svg>加厚</button>
    <button><svg class="i16"><use href="#addsolid"/></svg>添加实体<i class="caret"></i></button>
    <button><svg class="i16"><use href="#divide"/></svg>分割<i class="caret"></i></button>
    <button><svg class="i16"><use href="#simplify"/></svg>简化</button>
    <button><svg class="i16"><use href="#replace"/></svg>置换</button>
    <button><svg class="i16"><use href="#selfx"/></svg>解析自相交</button>
    <button><svg class="i16"><use href="#inlay"/></svg>镶嵌<i class="caret"></i></button>
  </div><h2>编辑模型<svg class="i8 launch" viewBox="0 0 8 8"><path d="M1 6V1h5" fill="none" stroke="#889"/><path d="M3 3h4v4H3z" fill="#eee" stroke="#889" stroke-width=".7"/><path d="M3 3l4 4" stroke="#333"/></svg></h2></div>
  <div class="group g4"><div class="small">
    <button><svg class="i16"><use href="#cylbend"/></svg>圆柱折弯<i class="caret"></i></button>
    <button><svg class="i16"><use href="#deform"/></svg>由指定点开始变形<i class="caret"></i></button>
    <button><svg class="i16"><use href="#wrap"/></svg>缠绕到面</button>
    <button><svg class="i16"><use href="#wraparr"/></svg>缠绕阵列到面</button>
  </div><h2>变形</h2></div>
  <div class="group g5"><div class="small">
    <button><svg class="i16"><use href="#pattern"/></svg>阵列几何体<i class="caret"></i></button>
    <button><svg class="i16"><use href="#mirror"/></svg>镜像几何体<i class="caret"></i></button>
    <button><svg class="i16"><use href="#move"/></svg>移动<i class="caret"></i></button>
    <button><svg class="i16"><use href="#copy"/></svg>复制</button>
    <button><svg class="i16"><use href="#scale"/></svg>缩放</button>
  </div><h2>基础编辑</h2></div>
  <div class="group g6"><div class="small">
    <button><svg class="i16"><use href="#datum"/></svg>基准面<i class="caret"></i></button>
  </div><h2>基准面</h2></div>
</section>

<div class="toolbar">
  <i class="grip"></i>
  <button class="on" aria-label="智能拾取"><svg class="i16"><use href="#bulbpick"/></svg></button>
  <button aria-label="加选"><svg class="i16"><use href="#plus"/></svg></button>
  <button aria-label="减选"><svg class="i16"><use href="#minus"/></svg></button>
  <button class="drop" aria-label="框选"><svg class="i16"><use href="#boxpick"/></svg><i class="caret"></i></button>
  <button aria-label="多边形"><svg class="i16"><use href="#hex"/></svg></button>
  <i class="sep"></i>
  <button aria-label="过滤器"><svg class="i16"><use href="#filter"/></svg></button>
  <label class="combo"><select aria-label="过滤类型"><option>造型</option></select></label>
  <button class="on" aria-label="部件"><svg class="i16"><use href="#partpick"/></svg></button>
  <label class="combo wide off"><select disabled aria-label="范围"><option>仅有零件</option></select></label>
  <button aria-label="链"><svg class="i16"><use href="#chain"/></svg></button>
  <button aria-label="印章"><svg class="i16"><use href="#stamp"/></svg></button>
  <i class="sep"></i>
  <button aria-label="列表一"><svg class="i16"><use href="#list"/></svg></button>
  <button aria-label="列表二"><svg class="i16"><use href="#list"/></svg></button>
  <button aria-label="列表三"><svg class="i16"><use href="#listr"/></svg></button>
  <button aria-label="列表四"><svg class="i16"><use href="#listg"/></svg></button>
  <button aria-label="选择"><svg class="i16"><use href="#arrow2"/></svg></button>
  <button aria-label="行"><svg class="i16"><use href="#rows"/></svg></button>
  <button aria-label="组"><svg class="i16"><use href="#boxes"/></svg></button>
  <button aria-label="全局"><svg class="i16"><use href="#earth"/></svg></button>
  <button aria-label="选项"><svg class="i16"><use href="#geary"/></svg></button>
  <i class="sep"></i>
  <button aria-label="方向"><svg class="i16"><use href="#compass"/></svg></button>
  <button aria-label="多段"><svg class="i16"><use href="#poly"/></svg></button>
  <button aria-label="方块"><svg class="i16"><use href="#square"/></svg></button>
  <label class="combo"><select aria-label="造型模式"><option>单一造型</option></select></label>
  <button aria-label="光标"><svg class="i16"><use href="#cursorg"/></svg></button>
  <button aria-label="齿轮"><svg class="i16"><use href="#gearg"/></svg></button>
  <button aria-label="播放"><svg class="i16"><use href="#playg"/></svg></button>
  <button aria-label="点"><svg class="i16"><use href="#dotsg"/></svg></button>
  <button aria-label="端点"><svg class="i16"><use href="#lineg"/></svg></button>
  <button aria-label="中点"><svg class="i16"><use href="#midg"/></svg></button>
  <button aria-label="圆心"><svg class="i16"><use href="#cdotg"/></svg></button>
  <button aria-label="象限"><svg class="i16"><use href="#quadg"/></svg></button>
  <button aria-label="控制点"><svg class="i16"><use href="#waveg"/></svg></button>
  <button aria-label="曲线"><svg class="i16"><use href="#wave2g"/></svg></button>
  <button aria-label="相切"><svg class="i16"><use href="#tang"/></svg></button>
  <button aria-label="线上"><svg class="i16"><use href="#lineg"/></svg></button>
  <button aria-label="面"><svg class="i16"><use href="#blockg"/></svg></button>
  <button aria-label="体"><svg class="i16"><use href="#blockg"/></svg></button>
</div>

<main class="work">
  <aside class="dock">
    <div class="docktitle"><span>添加实体</span><button aria-label="浮动"><svg class="i12" viewBox="0 0 12 12"><path d="M2 2h8v8H2zM4 5h4v2H4z" fill="#fff" stroke="#8b8e92"/></svg></button><button aria-label="关闭面板"><svg class="i12"><use href="#xmark"/></svg></button></div>
    <div class="dockbody">
      <nav class="side">
        <button class="active" aria-label="添加实体"><svg class="i24"><use href="#addsolid"/></svg></button>
        <button aria-label="历史"><svg class="i24"><use href="#tree"/></svg></button>
        <button aria-label="视觉"><svg class="i24"><use href="#visual"/></svg></button>
        <button aria-label="视图"><svg class="i24"><use href="#scene"/></svg></button>
        <button aria-label="用户"><svg class="i24"><use href="#users"/></svg></button>
      </nav>
      <form class="form">
        <div class="actions">
          <button type="button" aria-label="确定"><svg class="i16"><use href="#check"/></svg></button>
          <button type="button" aria-label="取消"><svg class="i18"><use href="#cross"/></svg></button>
          <button type="button" aria-label="应用"><svg class="i16"><use href="#apply"/></svg></button>
          <span class="grow"></span>
          <button type="button" aria-label="预览"><svg class="i16"><use href="#eye"/></svg></button>
          <button type="button" aria-label="信息"><svg class="i16"><use href="#info"/></svg></button>
          <button type="button" class="half" aria-label="展开"><svg class="tall"><use href="#expand"/></svg></button>
        </div>
        <section class="card"><h3>必选</h3><div class="rows">
          <div class="row"><label for="base">基体</label><input id="base" type="text" value="S1"><i class="swatch cyan"></i><button type="button" class="pk green" aria-label="拾取基体"><svg class="i16"><use href="#pickdown"/></svg></button></div>
          <div class="row"><label for="add">添加</label><div class="focused"><input id="add" type="text" value="选中1个"><i class="textcursor"></i></div><i class="swatch pink"></i><button type="button" class="chev" aria-label="列表"><svg class="tall"><use href="#chevrons"/></svg></button><button type="button" class="pk red" aria-label="拾取添加"><svg class="i16"><use href="#pickdown"/></svg></button></div>
        </div></section>
        <section class="card"><h3>设置</h3><div class="rows">
          <div class="row"><label for="bound">边界</label><input id="bound" type="text"><button type="button" class="chev" aria-label="列表"><svg class="tall"><use href="#chevrons"/></svg></button><button type="button" class="pk gold" aria-label="拾取边界"><svg class="i16"><use href="#pickdown"/></svg></button></div>
          <label class="keep"><input type="checkbox">保留添加实体</label>
        </div></section>
        <section class="card"><h3>公差</h3><div class="rows">
          <div class="row tol"><label for="tol">公差</label><div class="spin"><input id="tol" type="text" value="0.01"><span>mm</span><svg class="i8" viewBox="0 0 8 16"><path d="M1 5l3-3 3 3zM1 12l3 3 3-3z" fill="#333"/></svg></div></div>
        </div></section>
      </form>
    </div>
  </aside>

  <section class="doc">
    <div class="doctabs"><div class="doctab">* 山涧果子.Z3PRT<button aria-label="关闭标签"><svg class="i12" viewBox="0 0 12 12"><path d="M2 2l8 8M10 2l-8 8" stroke="#7d6838" stroke-width="2"/></svg></button></div><button class="addtab" aria-label="新标签"><svg class="i12" viewBox="0 0 12 12"><path d="M6 1v10M1 6h10" stroke="#999" stroke-width="1.500"/></svg></button><span class="grow"></span><button class="addtab" aria-label="标签列表"><svg class="i12" viewBox="0 0 12 12"><path d="M2 2h8M2 6h8l-4 4z" stroke="#888" fill="#888"/></svg></button></div>
    <div class="view">
      <svg class="model" aria-hidden="true"><defs><linearGradient id="side" gradientUnits="userSpaceOnUse" x1="589" y1="0" x2="782" y2="0"><stop offset="0" stop-color="#3f2b86"/><stop offset=".3" stop-color="#5031a0"/><stop offset=".7" stop-color="#5a36b0"/><stop offset="1" stop-color="#5634aa"/></linearGradient></defs>
      <g transform="translate(-361 -194)">
        <path d="M600 424L589 502 592 520 600 538 615 559 634 577 657 591 690 602 725 607 755 606 771 603 782 524z" fill="url(#side)"/>
        <path d="M1 0A1 1 0 0 1 -1 0z" transform="matrix(49.500 92 -122.500 28.800 732.500 432)" fill="#6c45d8"/>
        <path d="M683 340L1003 265 1102 449 782 524z" fill="#d79f00"/>
        <path d="M782 524L1102 449 1090 528 771 603z" fill="#ab7f00"/>
        <path d="M683 340L672 417 771 603M672 417L991 343 1090 528M991 343L1003 265" fill="none" stroke="#0ff" stroke-opacity=".2" stroke-width="3"/>
        <path d="M683 340L672 417 771 603" fill="none" stroke="#b5b8f5" stroke-opacity=".4" stroke-width="3" stroke-dasharray="12 6"/>
        <path d="M1 0A1 1 0 0 1 -1 0" transform="matrix(49.400 93.300 -122.500 28.800 721.300 510)" fill="none" stroke="#ff9fff" stroke-opacity=".25" stroke-width="3" vector-effect="non-scaling-stroke"/>
        <path d="M1 0A1 1 0 0 1 -.375 .927" transform="matrix(49.400 93.300 -122.500 28.800 721.300 510)" fill="none" stroke="#ff9fff" stroke-width="3" vector-effect="non-scaling-stroke"/>
        <path d="M1 0A1 1 0 0 1 -1 0" transform="matrix(49.500 92 -122.500 28.800 732.500 432)" fill="none" stroke="#ff9fff" stroke-width="3" vector-effect="non-scaling-stroke"/>
        <path d="M1 0A1 1 0 0 1 -1 0" transform="matrix(49.500 92 -122.500 28.800 732.500 432)" fill="none" stroke="#6c3d9a" stroke-width="1" stroke-dasharray="1 7" vector-effect="non-scaling-stroke"/>
        <path d="M683 340L1003 265 1102 449 1090 528 771 603 782 524zM782 524L1102 449" fill="none" stroke="#0ff" stroke-width="3" stroke-linejoin="round"/>
        <path d="M764 491L769 459 790 496M764 491L808 481 826 513 830 482 788 492" fill="none" stroke="#a66a00" stroke-width="1.300"/>
        <path d="M782 524L763 488" stroke="#3fb85a" stroke-width="2.500"/><path d="M755 476l6 6-6 1z" fill="#327a40"/><path d="M747 460l5 5-5 2z" fill="#6b7a40"/>
        <path d="M782 524L840 511" stroke="#b5433a" stroke-width="2.500"/><path d="M838 507l10 3-8 5z" fill="#b5302d"/><path d="M861 503l8 2-7 4z" fill="#577a44"/>
        <path d="M782 524L788 484" stroke="#2e1fb5" stroke-width="2"/><path d="M788 475l4 9h-7z" fill="#0b00e5"/><path d="M789 480l2-17" stroke="#7f621b"/><path d="M791 460l2 8h-5z" fill="#6d4b0c"/>
        <path d="M787 450h9l-9 12h10M872 498l10 12M882 498l-10 12M739 445l4 6 4-6" fill="none" stroke="#a66500" stroke-width="1.300"/>
        <path d="M423 612L408 586" stroke="#30d52b" stroke-width="2"/><path d="M405 581l8 6-6 4z" fill="#1d8a21"/>
        <path d="M423 612L457 605" stroke="#f00" stroke-width="2"/><path d="M454 602l10 2-8 5z" fill="#c81010"/>
        <path d="M423 612L427 592" stroke="#00f" stroke-width="2"/><path d="M428 583l3 9h-7z" fill="#00c"/>
        <path d="M399 574l4 6 4-6M403 580v6" fill="none" stroke="#30c52b" stroke-width="1.500"/><path d="M423 575h8l-8 11h9" fill="none" stroke="#00f" stroke-width="1.500"/><path d="M464 599l9 12M473 599l-9 12" stroke="#f00" stroke-width="1.500"/>
      </g></svg>
      <div class="viewtop">
        <p class="hint">点击&lt;F6&gt;循环拾取直到最后选择.<br>&lt;单击右键&gt;获取实体输入选项.</p>
        <div class="viewtools">
          <button aria-label="退出"><svg class="i16"><use href="#exit"/></svg></button>
          <button class="drop" aria-label="栅格"><svg class="i16"><use href="#gridview"/></svg><i class="caret"></i></button>
          <button aria-label="橡皮"><svg class="i16"><use href="#eraser"/></svg></button>
          <button aria-label="对齐面"><svg class="i16"><use href="#topface"/></svg></button>
          <button class="drop" aria-label="着色"><svg class="i16"><use href="#cube"/></svg><i class="caret"></i></button>
          <button class="drop" aria-label="线框"><svg class="i16"><use href="#wire"/></svg><i class="caret"></i></button>
          <button class="drop" aria-label="切换"><svg class="i16"><use href="#swap"/></svg><i class="caret"></i></button>
          <button class="drop" aria-label="缩放"><svg class="i16"><use href="#zoomdoc"/></svg><i class="caret"></i></button>
          <button class="drop" aria-label="中心"><svg class="i16"><use href="#target"/></svg><i class="caret"></i></button>
          <button aria-label="全屏"><svg class="i16"><use href="#fullview"/></svg></button>
          <button class="drop" aria-label="标注"><svg class="i16"><use href="#dim"/></svg><i class="caret"></i></button>
          <button class="drop" aria-label="显示"><svg class="i16"><use href="#showtree"/></svg><i class="caret"></i></button>
          <button aria-label="线色"><i class="blackbar"></i></button>
          <button aria-label="颜色"><i class="goldbox"></i></button>
          <button class="drop" aria-label="图层管理"><svg class="i16"><use href="#layers"/></svg><i class="caret"></i></button>
          <label class="combo layer off"><svg class="i16"><use href="#bulb"/></svg><svg class="i16"><use href="#disc"/></svg><select disabled aria-label="图层"><option>图层0000</option></select></label>
        </div>
      </div>
      <output class="measure">340.889mm</output>
    </div>
  </section>
</main>

<footer class="status">
  <span>选择要添加的实体。 &lt;单击中键&gt;结束.</span>
  <div class="statusright">
    <button class="on" aria-label="工具"><svg class="i16"><use href="#tools"/></svg></button>
    <button aria-label="显示器"><svg class="i16"><use href="#monitor"/></svg></button>
    <button aria-label="消息"><svg class="i16"><use href="#note"/></svg></button>
    <input type="text" aria-label="输入">
  </div>
</footer>

<aside class="monitor">
  <svg class="shield" viewBox="0 0 16 18"><path d="M8 0l8 3v6c0 5-4 7-8 9-4-2-8-4-8-9V3z" fill="#09b968" stroke="#3178d8"/><path d="M4 8l3 3 5-5" fill="none" stroke="#fff" stroke-width="2"/></svg>
  <div class="gauge"><svg class="ring" viewBox="0 0 42 42"><circle cx="21" cy="21" r="19" fill="#30323b" stroke="#484a54" stroke-width="2"/><path d="M2 16v5" stroke="#d5a82e" stroke-width="2"/><path d="M40 16v5" stroke="#d5a82e" stroke-width="2"/><path d="M2 20a19 19 0 0 0 38 0" fill="none" stroke="#8cc860" stroke-width="2"/><path d="M6 32a19 19 0 0 0 30 0" fill="none" stroke="#45c2a2" stroke-width="2"/></svg><span><b>64</b><small>%</small></span></div>
  <div class="rate"><svg class="i8" viewBox="0 0 8 8"><path d="M4 0l3 4H5v4H3V4H1z" fill="#20a5f5"/></svg><span>1.1<small>K/s</small></span></div>
  <div class="rate"><svg class="i8" viewBox="0 0 8 8"><path d="M4 8l3-4H5V0H3v4H1z" fill="#17bf62"/></svg><span>0.1<small>K/s</small></span></div>
</aside>
<div class="ime">
  <svg class="sogou"><use href="#sogou"/></svg>
  <button>中</button><button>°,</button>
  <button aria-label="语音"><svg class="i16"><use href="#mic"/></svg></button>
  <button aria-label="键盘"><svg class="i16"><use href="#keyb"/></svg></button>
  <button aria-label="皮肤"><svg class="i16"><use href="#shirt"/></svg></button>
  <button aria-label="游戏"><svg class="i16"><use href="#pad"/></svg></button>
  <button aria-label="应用"><svg class="i16"><use href="#apps"/></svg></button>
  <button aria-label="设置"><svg class="i16"><use href="#imeset"/></svg></button>
</div>

<svg class="notes" aria-hidden="true"><path d="M318 261L736 340 735 343 745 340 737 333 737 336zM325 329L673 421 672 424 683 422 675 413 674 416z" fill="#f00" stroke="#f00"/></svg>
<span class="badge n1">1</span><span class="badge n2">2</span><span class="badge n3">3</span>
<span class="watermark">CSDN @山涧果子</span>
</body>
</html>
```
FILE: styles.css
```css
* { box-sizing: border-box; }
body {
  margin: 0;
  height: 100vh;
  display: flex;
  flex-direction: column;
  position: relative;
  overflow: hidden;
  background: #e1e5e8;
  color: #1c1c1c;
  font: 12px/16px "Noto Sans CJK SC", "Noto Sans", sans-serif;
}
button {
  display: flex;
  align-items: center;
  justify-content: center;
  margin: 0;
  padding: 0;
  border: 0;
  background: none;
  color: inherit;
  font: inherit;
  white-space: nowrap;
}
input, select { font: inherit; color: #000; }
h2, h3, p { margin: 0; font-size: 12px; }
svg { display: block; flex: none; }
.sprite { position: absolute; width: 0; height: 0; }
.i8 { width: 8px; height: 8px; }
.i12 { width: 12px; height: 12px; }
.i16 { width: 16px; height: 16px; }
.i18 { width: 18px; height: 18px; }
.i24 { width: 24px; height: 24px; }
.i32 { width: 32px; height: 32px; }
.tall { width: 12px; height: 16px; }
.grow { flex: 1; }
.caret {
  flex: none;
  width: 6px;
  height: 3px;
  border: 3px solid transparent;
  border-top-color: #444;
  border-bottom: 0;
}

/* title bar */
.titlebar { display: flex; align-items: center; flex: none; height: 25px; }
.quick { display: flex; align-items: center; width: 256px; padding-left: 3px; }
.quick button { width: 24px; height: 24px; }
.quick .slim { width: 16px; }
.vline { width: 1px; height: 12px; margin: 0 7px 0 5px; background: #999; }
.menu { display: flex; color: #000; }
.menu button { padding: 0 9px 0 8px; }
.title { margin-left: 38px; color: #333; white-space: nowrap; }
.winctl { display: flex; gap: 11px; margin-left: auto; padding-right: 8px; }

/* ribbon tabs */
.tabs { display: flex; flex: none; height: 22px; padding-left: 1px; border-bottom: 1px solid #b7bcc8; }
.filebtn { width: 75px; height: 20px; margin-top: 1px; background: #2a5db5; border: 1px solid #17428f; color: #fff; }
.tablist { display: flex; gap: 2px; margin-left: 4px; height: 22px; color: #333; font-family: "Open Sans", "Noto Sans CJK SC", sans-serif; }
.tablist button { padding: 1px 10px 0; }
.tablist .active { background: #fcfcfc; border: 1px solid #b7bcc8; border-bottom: 0; padding: 0 9px; }
.tabtools { display: flex; align-items: center; margin-left: auto; padding-right: 1px; height: 20px; }
.tabtools button { min-width: 16px; }
.find { display: flex; align-items: center; width: 158px; height: 19px; margin: 0 10px 0 9px; padding: 0 6px 0 2px; background: #fff; border: 1px solid #b7bcc8; }
.find input { flex: 1; min-width: 0; border: 0; padding: 0; background: none; outline: 0; }
.find input::placeholder { color: #777; }
.tabtools .help { gap: 6px; margin: 0 5px 0 12px; }

/* ribbon */
.ribbon { display: flex; flex: none; height: 94px; margin-left: 1px; background: #fcfcfc; border-bottom: 1px solid #b7bcc8; }
.group { position: relative; display: flex; flex-direction: column; justify-content: space-between; padding: 4px 0 2px; border-right: 1px solid #ccd0d6; }
.group h2 { font-weight: 400; color: #5f6478; text-align: center; }
.g1 { width: 313px; }
.g2 { width: 289px; }
.g3 { width: 261px; }
.g4 { width: 245px; }
.g5 { width: 161px; }
.g6 { width: 85px; }
.big { display: flex; padding-left: 8px; }
.g2 .big { padding-left: 3px; }
.big button { flex-direction: column; justify-content: flex-start; height: 65px; min-width: 32px; padding: 2px 6px 0; }
.big svg { margin: 0 -6px 2px; }
.big .caret { margin-top: 8px; }
.small { display: grid; grid-auto-flow: column; grid-template-rows: repeat(3, 23px); justify-content: start; padding: 0 0 0 8px; }
.small button { justify-content: flex-start; gap: 4px; }
.small .caret { margin-left: 4px; }
.g3 .small { grid-template-columns: 76px 88px auto; }
.g4 .small { grid-template-columns: 136px auto; }
.g5 .small { grid-template-columns: 100px auto; }
.g3 h2 { padding-right: 16px; }
.launch { position: absolute; right: 5px; bottom: 6px; }

/* selection toolbar */
.toolbar { display: flex; align-items: center; flex: none; height: 31px; padding-left: 4px; }
.toolbar button { width: 24px; height: 22px; flex: none; }
.toolbar .drop { width: 36px; gap: 4px; padding-left: 2px; }
.toolbar .on { width: 22px; }
.on { background: #ffe075; border: 1px solid #cf9832; }
.grip { width: 2px; height: 16px; margin-right: 4px; background: repeating-linear-gradient(#778 0 2px, transparent 2px 4px); }
.sep { width: 1px; height: 15px; margin: 0 3px; background: #bfc4ca; }
.combo { position: relative; display: flex; align-items: center; width: 97px; height: 21px; margin: 0 1px 0 2px; background: #fff; border: 1px solid #b9bec8; }
.combo select { flex: 1; min-width: 0; height: 19px; padding: 0 2px; border: 0; background: none; appearance: none; opacity: 1; }
.combo::after { content: ""; position: absolute; right: 5px; top: 8px; border: 3px solid transparent; border-top-color: #333; border-bottom: 0; }
.combo.wide { width: 130px; }
.combo.off { background: #ededee; border-color: #d8dbe0; }
.combo.off select { color: #777; }
.combo.off::after { border-top-color: #aaa; }

/* left dock */
.work { display: flex; flex: 1; min-height: 0; }
.dock { display: flex; flex-direction: column; width: 358px; flex: none; }
.docktitle { display: flex; align-items: center; gap: 8px; height: 19px; padding: 0 6px 0 4px; color: #333; }
.docktitle span { flex: 1; }
.dockbody { display: flex; flex: 1; margin-left: 2px; border: 1px solid #b7bcc8; border-left: 0; }
.side { width: 30px; border-right: 1px solid #b7bcc8; }
.side button { width: 28px; height: 48px; }
.side .active { width: 30px; background: #fcfcfc; border: 1px solid #b7bcc8; border-top: 0; border-right: 0; }
.form { flex: 1; min-width: 0; padding: 3px 5px 0; background: #dde1e9; }
.actions { display: flex; gap: 2px; margin: 0 -2px 4px; }
.actions button { width: 28px; height: 24px; background: #fcfcfc; border: 1px solid #b7bcc8; }
.actions .half { width: 14px; }
.card { margin-bottom: 2px; border: 1px solid #b7bcc8; }
.card h3 { display: flex; align-items: center; gap: 5px; height: 23px; padding: 2px 0 0 4px; background: #fcfcfc; border-bottom: 1px solid #b7bcc8; color: #333; }
.card h3::before { content: ""; border: 5px solid transparent; border-top: 8px solid #50545a; border-bottom: 0; }
.rows { display: flex; flex-direction: column; gap: 4px; padding: 6px 8px 3px 7px; }
.row { display: flex; align-items: center; height: 22px; }
.row > label { width: 102px; flex: none; color: #000; }
.row input { flex: 1; min-width: 0; height: 22px; padding: 0 3px; background: #fff; border: 1px solid #b7bcc8; outline: 0; }
.focused { display: flex; align-items: center; flex: 1; height: 24px; margin-left: -1px; background: #fff; border: 1px solid #1684e5; }
.focused input { flex: none; width: 46px; height: 20px; padding: 0 0 0 2px; border: 0; }
.textcursor { width: 1px; height: 14px; background: #000; }
.swatch { width: 9px; height: 22px; margin: 0 0 0 1px; border: 1px solid #999; outline: 1px solid #fff; outline-offset: -2px; }
.cyan { background: #0ff; }
.pink { background: #ff9fff; }
.chev { width: 12px; margin-left: 7px; }
.pk { width: 16px; margin: 0 5px 0 4px; }
.chev + .pk { margin-left: 10px; }
.green { color: #43b749; }
.red { color: #c83b4c; }
.gold { color: #c9a33a; }
.keep { display: flex; align-items: center; gap: 5px; height: 18px; color: #000; }
.keep input { appearance: none; width: 13px; height: 13px; margin: 0 0 0 1px; background: #cfd4dc; border: 1px solid #8b8f94; box-shadow: inset 0 0 0 1px #f3f3f3; }
.tol > label { width: 101px; }
.spin { display: flex; align-items: center; flex: 1; height: 22px; padding-right: 4px; background: #fff; border: 1px solid #b7bcc8; }
.spin input { height: 20px; padding: 0 2px; border: 0; }
.spin svg { height: 16px; margin-left: 4px; }
.spin span { font-family: "Noto Sans", sans-serif; color: #000; }

/* document */
.doc { display: flex; flex-direction: column; flex: 1; min-width: 0; margin: 0 1px 0 2px; border-left: 1px solid #b7bcc8; border-right: 1px solid #b7bcc8; border-bottom: 1px solid #f3f3f3; }
.doctabs { display: flex; height: 22px; border-bottom: 1px solid #b7bcc8; }
.doctab { display: flex; align-items: center; gap: 5px; width: 156px; height: 22px; padding-left: 30px; background: #fcfcfc; border: 1px solid #b7bcc8; border-bottom: 0; color: #000; white-space: nowrap; }
.addtab { width: 22px; }
.view { position: relative; flex: 1; min-height: 0; overflow: hidden; display: flex; flex-direction: column; justify-content: space-between; background: linear-gradient(#fff, #9f9f9f); }
.model { position: absolute; left: 0; top: 0; width: 100%; height: 100%; }
.viewtop { position: relative; display: flex; align-items: flex-start; padding-top: 2px; }
.hint { width: 201px; flex: none; padding: 6px 0 0 20px; font-size: 11px; line-height: 14px; color: #111; white-space: nowrap; }
.viewtools { display: flex; align-items: center; height: 22px; }
.viewtools button { width: 25px; height: 22px; }
.viewtools .drop { width: 37px; gap: 3px; }
.blackbar { width: 16px; height: 7px; background: #000; border: 1px solid #777; }
.goldbox { width: 16px; height: 16px; background: #ffba00; border: 1px solid #1b2a6b; }
.layer { width: 115px; padding-left: 4px; }
.measure { position: relative; padding: 0 0 0 4px; font: 17px/22px "Noto Sans", sans-serif; color: #111; }

/* status bar */
.status { display: flex; align-items: center; justify-content: space-between; flex: none; height: 29px; padding-left: 6px; border-top: 1px solid #b7bcc8; }
.statusright { display: flex; align-items: center; flex: 0 0 453px; height: 25px; padding: 0 2px 0 14px; border-left: 1px solid #888; }
.statusright button { width: 21px; height: 20px; margin-right: 8px; }
.statusright input { flex: 1; min-width: 0; height: 22px; background: #fff; border: 1px solid #b7bcc8; }

/* desktop widgets floating over the window */
.monitor { position: absolute; left: 1291px; top: 408px; width: 42px; height: 150px; padding-top: 9px; border-radius: 7px; background: #343640; color: #fff; font-family: "Noto Sans", sans-serif; box-shadow: 0 2px 5px #0003; }
.shield { width: 16px; height: 18px; margin: 0 auto 8px; }
.gauge { position: relative; display: flex; align-items: center; justify-content: center; height: 42px; margin-bottom: 4px; }
.ring { position: absolute; left: 0; top: 0; width: 42px; height: 42px; }
.gauge span { position: relative; }
.gauge b { font-size: 17px; }
.gauge small { font-size: 8px; color: #aaa; }
.rate { display: flex; align-items: center; gap: 4px; height: 29px; padding-left: 5px; font-size: 11px; line-height: 11px; }
.rate small { display: block; font-size: 9px; line-height: 9px; color: #bbb; }
.ime { position: absolute; left: 1117px; top: 536px; display: flex; align-items: center; width: 224px; height: 26px; padding-left: 32px; background: #fff; border: 1px solid #b4c9e0; }
.sogou { position: absolute; left: -1px; top: -5px; width: 32px; height: 32px; }
.ime button { width: 24px; color: #0b6edb; font-size: 15px; font-weight: 700; }
.notes { position: absolute; left: 0; top: 0; width: 100%; height: 100%; pointer-events: none; }
.badge { position: absolute; display: flex; align-items: center; justify-content: center; width: 36px; height: 36px; border: 1px solid #fff; border-radius: 50%; background: #fa4040; color: #fff; font: 18px/20px "Noto Sans", sans-serif; }
.n1 { left: 707px; top: 20px; }
.n2 { left: 254px; top: 224px; }
.n3 { left: 259px; top: 304px; }
.watermark { position: absolute; right: 15px; bottom: 6px; font-size: 17px; line-height: 24px; color: #8b8d90; text-shadow: 1px 1px #fff; }
```
